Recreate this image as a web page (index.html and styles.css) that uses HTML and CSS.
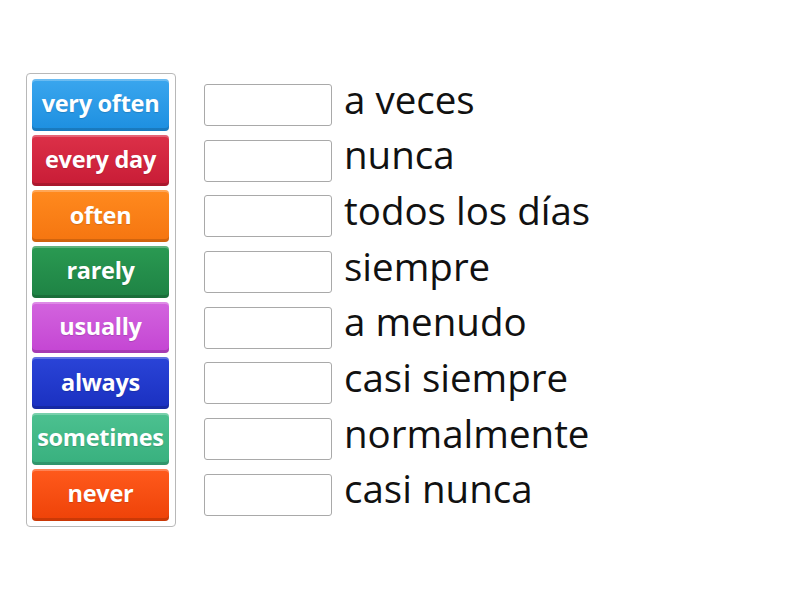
FILE: index.html
```html
<!DOCTYPE html>
<html>
<head>
<meta charset="utf-8">
<link rel="stylesheet" href="styles.css">
</head>
<body>
<div class="activity">
  <div class="bank">
    <div class="tile c1">very often</div>
    <div class="tile c2">every day</div>
    <div class="tile c3">often</div>
    <div class="tile c4">rarely</div>
    <div class="tile c5">usually</div>
    <div class="tile c6">always</div>
    <div class="tile c7">sometimes</div>
    <div class="tile c8">never</div>
  </div>
  <div class="targets">
    <div class="row"><div class="slot"></div><span class="label">a veces</span></div>
    <div class="row"><div class="slot"></div><span class="label">nunca</span></div>
    <div class="row"><div class="slot"></div><span class="label">todos los días</span></div>
    <div class="row"><div class="slot"></div><span class="label">siempre</span></div>
    <div class="row"><div class="slot"></div><span class="label">a menudo</span></div>
    <div class="row"><div class="slot"></div><span class="label">casi siempre</span></div>
    <div class="row"><div class="slot"></div><span class="label">normalmente</span></div>
    <div class="row"><div class="slot"></div><span class="label">casi nunca</span></div>
  </div>
</div>
</body>
</html>
```
FILE: styles.css
```css
html, body {
  margin: 0;
  padding: 0;
  background: #fff;
  font-family: "Open Sans", "Liberation Sans", sans-serif;
}
.activity {
  display: flex;
  align-items: flex-start;
  padding: 73px 0 0 26px;
}
.bank {
  width: 150px;
  border: 1px solid #b8b8b8;
  border-radius: 4px;
  padding: 5px 6px 5px 5px;
  box-sizing: border-box;
  display: flex;
  flex-direction: column;
  gap: 4px;
}
.tile {
  height: 51.7px;
  box-sizing: border-box;
  padding-bottom: 3px;
  border-radius: 4px;
  display: flex;
  align-items: center;
  justify-content: center;
  color: #fff;
  font-weight: 700;
  font-size: 23.5px;
  letter-spacing: -0.3px;
  white-space: nowrap;
  box-shadow: inset 0 2px 0 rgba(255,255,255,0.25), inset 0 -3px 0 rgba(0,0,0,0.15);
  text-shadow: 0 1px 1px rgba(0,0,0,0.15);
}
.c1 { background: linear-gradient(#3aa6ee, #1d8fe0); }
.c2 { background: linear-gradient(#dc3048, #c81c36); }
.c3 { background: linear-gradient(#ff8a1e, #f57510); }
.c4 { background: linear-gradient(#2a9a52, #1e8244); }
.c5 { background: linear-gradient(#d364de, #c445d3); }
.c6 { background: linear-gradient(#2a44d8, #1a30c0); }
.c7 { background: linear-gradient(#4cc190, #38b07e); }
.c8 { background: linear-gradient(#ff5a1c, #ee4208); }
.targets {
  display: flex;
  flex-direction: column;
  margin-left: 28px;
  padding-top: 4px;
}
.row {
  height: 55.7px;
  display: flex;
  align-items: center;
}
.slot {
  width: 128px;
  height: 42px;
  box-sizing: border-box;
  border: 1px solid #a9a9a9;
  border-radius: 3px;
  background: #fff;
}
.label {
  margin-left: 12px;
  font-size: 38.5px;
  color: #111;
  line-height: 1;
  position: relative;
  top: -6px;
}
```
